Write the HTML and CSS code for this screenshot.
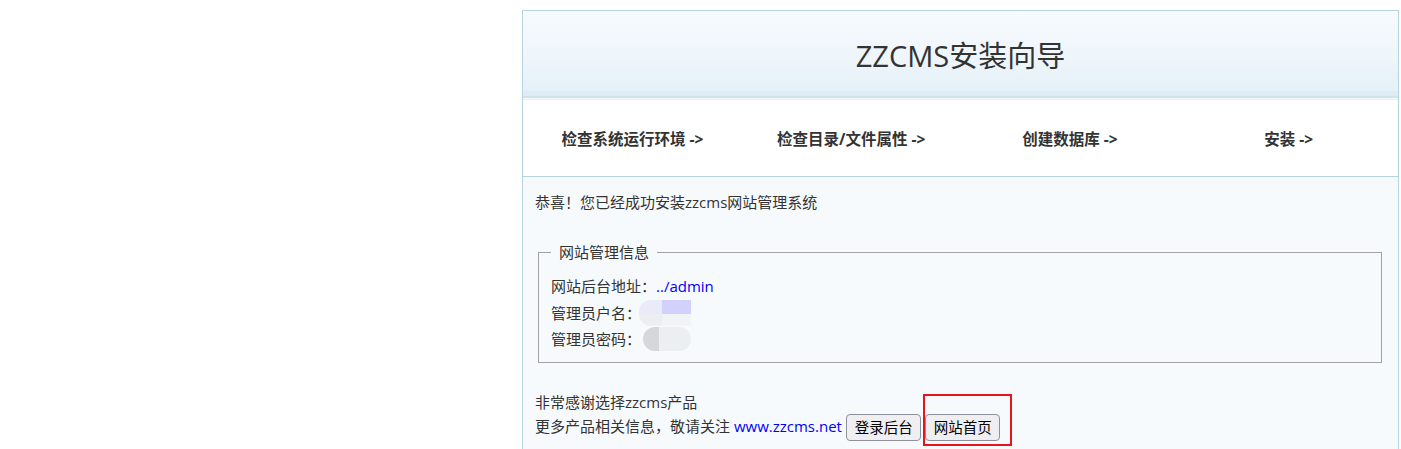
FILE: index.html
```html
<!DOCTYPE html>
<html lang="zh-CN">
<head>
<meta charset="utf-8">
<title>ZZCMS安装向导</title>
<link rel="stylesheet" href="styles.css">
</head>
<body>
<div class="wrap">
  <div class="header">
    <h1 class="title">ZZCMS安装向导</h1>
  </div>
  <div class="header-band"></div>
  <div class="steps">
    <div class="step">检查系统运行环境 -&gt;</div>
    <div class="step">检查目录/文件属性 -&gt;</div>
    <div class="step">创建数据库 -&gt;</div>
    <div class="step">安装 -&gt;</div>
  </div>
  <div class="content">
    <p class="congrats">恭喜！您已经成功安装zzcms网站管理系统</p>
    <fieldset class="info">
      <legend class="info-legend">网站管理信息</legend>
      <div class="info-row">网站后台地址：<a class="link" href="#">../admin</a></div>
      <div class="info-row">管理员户名：<span class="blur blur-user"></span></div>
      <div class="info-row">管理员密码：<span class="blur blur-pass"></span></div>
    </fieldset>
    <div class="thanks">
      <div class="thanks-row">非常感谢选择zzcms产品</div>
      <div class="thanks-row thanks-actions">更多产品相关信息，敬请关注 <a class="link" href="#">www.zzcms.net</a> <button class="btn">登录后台</button> <span class="marked"><button class="btn">网站首页</button></span></div>
    </div>
  </div>
</div>
</body>
</html>
```

FILE: styles.css
```css
html, body {
  margin: 0;
  padding: 0;
  background: #ffffff;
}

body {
  font-family: "Open Sans", "Noto Sans CJK SC", sans-serif;
  font-size: 15px;
  color: #333333;
}

.wrap {
  width: 875px;
  margin: 10px 0 0 522px;
  border: 1px solid #b4d4df;
  border-bottom: none;
  background: #f6fafd;
}

.header {
  height: 74px;
  padding-top: 6px;
  display: flex;
  align-items: center;
  justify-content: center;
  background: linear-gradient(#f7fbfe 0%, #eef5fb 60%, #e5f0f8 100%);
}

.title {
  margin: 0;
  font-size: 29px;
  font-weight: normal;
  color: #333333;
  letter-spacing: 0;
}

.header-band {
  height: 5px;
  background: #deecf5;
  border-bottom: 2px solid #d0e2eb;
  margin-bottom: 1px;
}

.steps {
  display: grid;
  grid-template-columns: repeat(4, 1fr);
  height: 76px;
  align-items: center;
  background: #ffffff;
  border-top: 1px solid #e4eef3;
  border-bottom: 1px solid #b4d4df;
}

.step {
  text-align: center;
  font-weight: bold;
  font-size: 15.5px;
  color: #333333;
}

.content {
  padding: 14px 16px 8px 12px;
}

.congrats {
  margin: 0;
  line-height: 22px;
}

.info {
  margin: 29px 0 0 3px;
  padding: 11px 12px 9px 12px;
  border: 1px solid #a3a3a3;
}

.info-legend {
  padding: 0 8px;
  margin-left: 0;
  line-height: 20px;
}

.info-row {
  height: 26.5px;
  line-height: 26px;
  display: flex;
  align-items: center;
}

.link {
  color: #0000ff;
  text-decoration: none;
}

.blur {
  display: inline-block;
  width: 52px;
  height: 26px;
  border-radius: 13px;
}

.blur-user {
  margin-left: -2px;
  background:
    linear-gradient(to right, #e9ebf9 0 45%, #d1d1fb 45% 100%) top / 100% 55% no-repeat,
    linear-gradient(to right, #eceef2 0 45%, #f1f3f6 45% 100%) bottom / 100% 45% no-repeat;
  border-radius: 12px 0 0 12px;
}

.blur-pass {
  width: 48px;
  height: 24px;
  margin-left: 2px;
  background: linear-gradient(to right, #d5d7da 0 33%, #eceff2 33% 100%);
  border-radius: 12px;
}

.thanks {
  margin-top: 27px;
}

.thanks-row {
  line-height: 25px;
}

.thanks-actions {
  margin-top: -1px;
}

.btn {
  font-family: "Open Sans", "Noto Sans CJK SC", sans-serif;
  font-size: 14.5px;
  color: #000000;
  background: #efeff1;
  border: 1px solid #8f8f9d;
  border-radius: 4px;
  padding: 1px 7px 1px 8px;
  height: 27px;
  line-height: 23px;
  vertical-align: middle;
}

.marked {
  position: relative;
  display: inline-block;
}

.marked::after {
  content: "";
  position: absolute;
  left: -2px;
  top: -20px;
  right: -12px;
  bottom: -5px;
  border: 2px solid #e8141c;
  pointer-events: none;
}
```
